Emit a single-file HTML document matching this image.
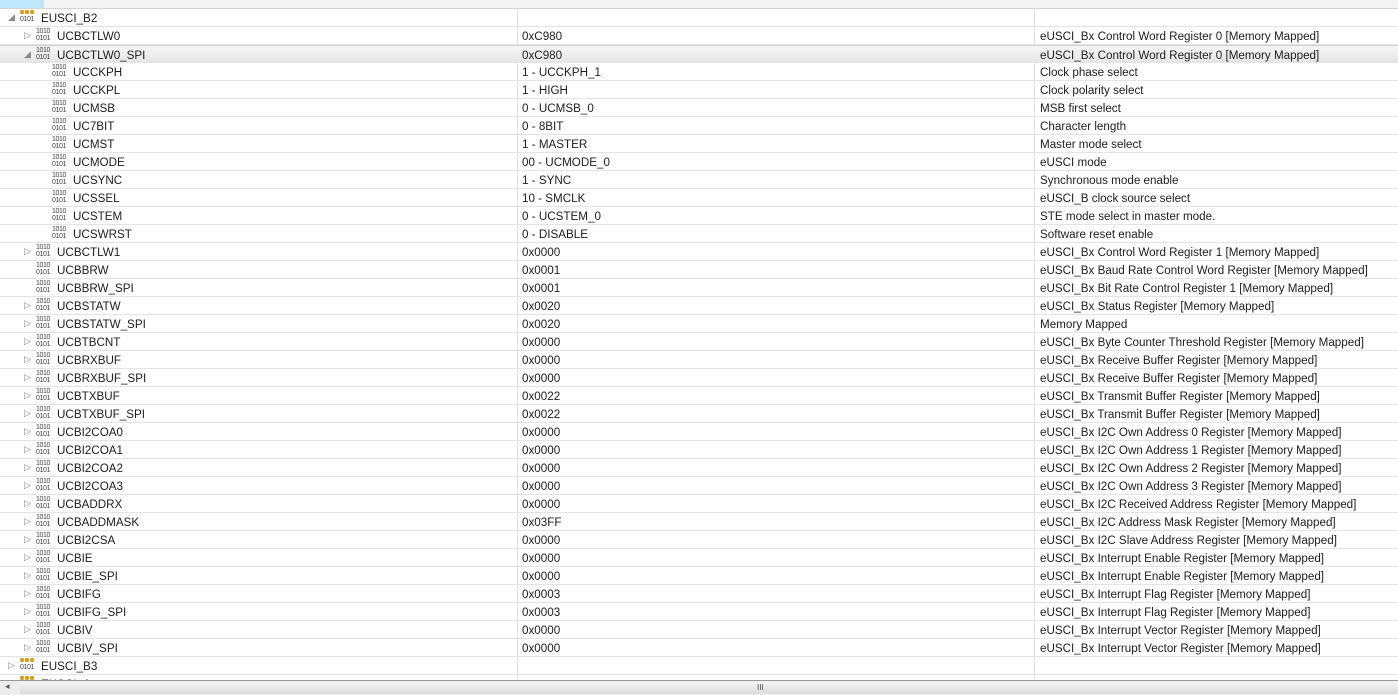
<!DOCTYPE html>
<html><head><style>
body{margin:0;width:1398px;height:694px;overflow:hidden;background:#fff;font-family:"Liberation Sans",sans-serif;font-size:11.65px;color:#1e1e1e;position:relative}
.hdr{position:absolute;left:0;top:0;width:1398px;height:8px;background:#f4f4f4;border-bottom:1px solid #d5d5d5}
.hdr .s{position:absolute;left:0;top:0;width:44px;height:8px;background:#bfe6fb}
.r{position:absolute;left:0;width:1398px;height:18px;border-bottom:1px solid #e4e4e4;box-sizing:border-box}
.sel{background:linear-gradient(#f6f6f6,#e6e6e6);border-top:1px solid #d0d0d0}
.t{position:absolute;top:3px;white-space:nowrap}
.v{left:522px}.d{left:1040px}
.ic{position:absolute;top:2px;font-size:7px;line-height:6.5px;color:#444;letter-spacing:-0.4px}
.ar{position:absolute;top:3px;font-size:9px;color:#888}
.vl{position:absolute;top:9px;width:1px;height:672px;background:#e0e0e0}
.grp{position:absolute;top:1px;font-size:7px;line-height:6px;color:#444;letter-spacing:-0.4px}
.grp b{display:block;height:7px;width:15px;background:radial-gradient(circle at 2px 2px,#d4a020 2px,transparent 2.5px) 0 0/5px 7px repeat-x;}
.sb{position:absolute;left:0;top:680px;width:1398px;height:14px;background:#ededed;border-top:1px solid #999}
.th{position:absolute;left:20px;top:1px;width:1378px;height:12px;background:linear-gradient(#f4f4f4,#dcdcdc)}
</style></head><body>
<div class="hdr"><div class="s"></div></div>
<div class="vl" style="left:517px"></div><div class="vl" style="left:1034px"></div>
<div id="rows"></div>
<div class="sb"><span style="position:absolute;left:5px;top:0;font-size:9px;color:#555">◂</span><div class="th"><span style="position:absolute;left:737px;top:1px;font-size:8px;color:#444">III</span></div></div>
<script>
var R=[
[0,'g','o','EUSCI_B2','',''],
[1,'r','c','UCBCTLW0','0xC980','eUSCI_Bx Control Word Register 0 [Memory Mapped]'],
[1,'r','o','UCBCTLW0_SPI','0xC980','eUSCI_Bx Control Word Register 0 [Memory Mapped]'],
[2,'r','','UCCKPH','1 - UCCKPH_1','Clock phase select'],
[2,'r','','UCCKPL','1 - HIGH','Clock polarity select'],
[2,'r','','UCMSB','0 - UCMSB_0','MSB first select'],
[2,'r','','UC7BIT','0 - 8BIT','Character length'],
[2,'r','','UCMST','1 - MASTER','Master mode select'],
[2,'r','','UCMODE','00 - UCMODE_0','eUSCI mode'],
[2,'r','','UCSYNC','1 - SYNC','Synchronous mode enable'],
[2,'r','','UCSSEL','10 - SMCLK','eUSCI_B clock source select'],
[2,'r','','UCSTEM','0 - UCSTEM_0','STE mode select in master mode.'],
[2,'r','','UCSWRST','0 - DISABLE','Software reset enable'],
[1,'r','c','UCBCTLW1','0x0000','eUSCI_Bx Control Word Register 1 [Memory Mapped]'],
[1,'r','','UCBBRW','0x0001','eUSCI_Bx Baud Rate Control Word Register [Memory Mapped]'],
[1,'r','','UCBBRW_SPI','0x0001','eUSCI_Bx Bit Rate Control Register 1 [Memory Mapped]'],
[1,'r','c','UCBSTATW','0x0020','eUSCI_Bx Status Register [Memory Mapped]'],
[1,'r','c','UCBSTATW_SPI','0x0020','Memory Mapped'],
[1,'r','c','UCBTBCNT','0x0000','eUSCI_Bx Byte Counter Threshold Register [Memory Mapped]'],
[1,'r','c','UCBRXBUF','0x0000','eUSCI_Bx Receive Buffer Register [Memory Mapped]'],
[1,'r','c','UCBRXBUF_SPI','0x0000','eUSCI_Bx Receive Buffer Register [Memory Mapped]'],
[1,'r','c','UCBTXBUF','0x0022','eUSCI_Bx Transmit Buffer Register [Memory Mapped]'],
[1,'r','c','UCBTXBUF_SPI','0x0022','eUSCI_Bx Transmit Buffer Register [Memory Mapped]'],
[1,'r','c','UCBI2COA0','0x0000','eUSCI_Bx I2C Own Address 0 Register [Memory Mapped]'],
[1,'r','c','UCBI2COA1','0x0000','eUSCI_Bx I2C Own Address 1 Register [Memory Mapped]'],
[1,'r','c','UCBI2COA2','0x0000','eUSCI_Bx I2C Own Address 2 Register [Memory Mapped]'],
[1,'r','c','UCBI2COA3','0x0000','eUSCI_Bx I2C Own Address 3 Register [Memory Mapped]'],
[1,'r','c','UCBADDRX','0x0000','eUSCI_Bx I2C Received Address Register [Memory Mapped]'],
[1,'r','c','UCBADDMASK','0x03FF','eUSCI_Bx I2C Address Mask Register [Memory Mapped]'],
[1,'r','c','UCBI2CSA','0x0000','eUSCI_Bx I2C Slave Address Register [Memory Mapped]'],
[1,'r','c','UCBIE','0x0000','eUSCI_Bx Interrupt Enable Register [Memory Mapped]'],
[1,'r','c','UCBIE_SPI','0x0000','eUSCI_Bx Interrupt Enable Register [Memory Mapped]'],
[1,'r','c','UCBIFG','0x0003','eUSCI_Bx Interrupt Flag Register [Memory Mapped]'],
[1,'r','c','UCBIFG_SPI','0x0003','eUSCI_Bx Interrupt Flag Register [Memory Mapped]'],
[1,'r','c','UCBIV','0x0000','eUSCI_Bx Interrupt Vector Register [Memory Mapped]'],
[1,'r','c','UCBIV_SPI','0x0000','eUSCI_Bx Interrupt Vector Register [Memory Mapped]'],
[0,'g','c','EUSCI_B3','',''],
[0,'g','c','EUSCI_A','','']];
var h='';
R.forEach(function(x,i){
var top=9+18*i,ind=x[0]*16;
h+='<div class="r'+(i==2?' sel':'')+'" style="top:'+top+'px">';
if(x[2])h+='<span class="ar" style="left:'+(ind+8)+'px">'+(x[2]=='o'?'◢':'▷')+'</span>';
if(x[1]=='g')h+='<span class="grp" style="left:'+(ind+20)+'px"><b></b>0101</span>';
else h+='<span class="ic" style="left:'+(ind+20)+'px">1010<br>0101</span>';
h+='<span class="t" style="left:'+(ind+41)+'px">'+x[3]+'</span><span class="t v">'+x[4]+'</span><span class="t d">'+x[5]+'</span></div>';
});
document.getElementById('rows').innerHTML=h;
</script>
</body></html>
